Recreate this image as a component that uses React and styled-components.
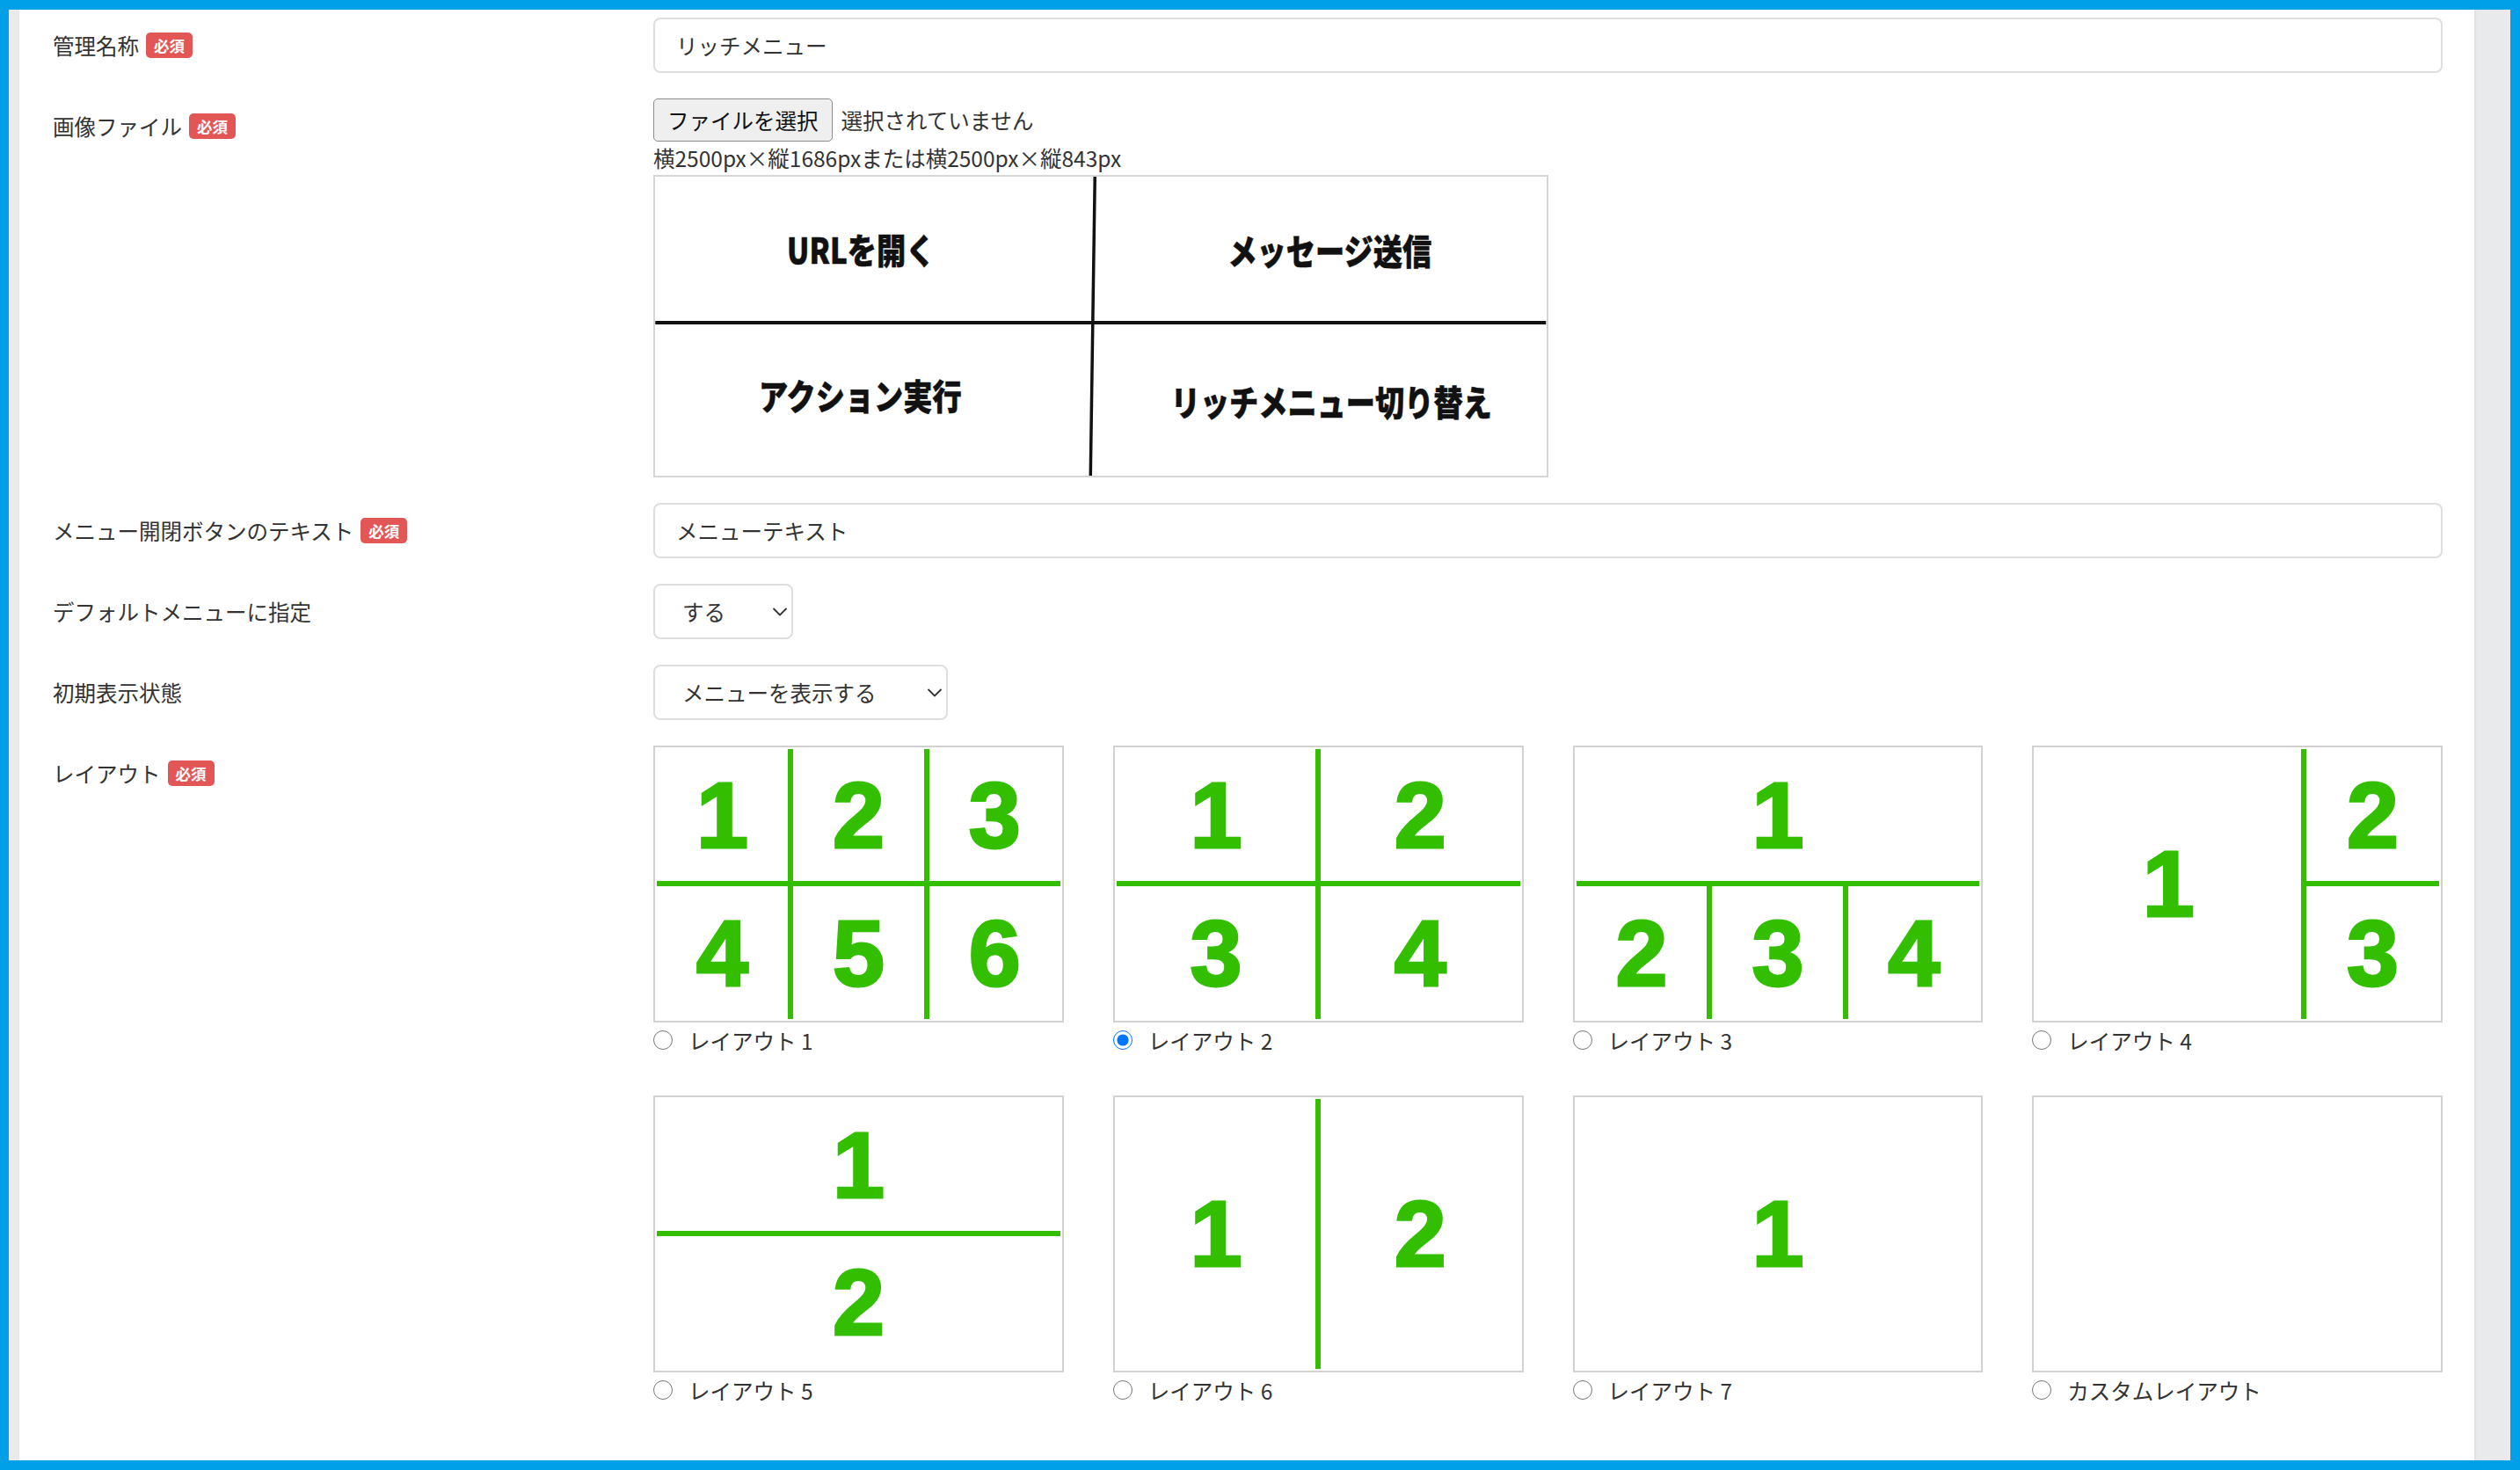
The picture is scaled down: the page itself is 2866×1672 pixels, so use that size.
import React from "react";
import styled, { createGlobalStyle } from "styled-components";

const GlobalStyle = createGlobalStyle`
    html, body {
        margin: 0;
        padding: 0;
        background: #00a0e9;
    }
    body {
        font-family: "Noto Sans CJK JP", "Noto Sans", sans-serif;
        color: #333;
    }
    * {
        box-sizing: border-box;
    }
`;

const GREEN = "#33bf00";

const layouts = [
    { name: "レイアウト 1", cols: "1fr 1fr 1fr", rows: "1fr 1fr", cells: [1, 2, 3, 4, 5, 6] },
    { name: "レイアウト 2", cols: "1fr 1fr", rows: "1fr 1fr", cells: [1, 2, 3, 4], checked: true },
    { name: "レイアウト 3", cols: "1fr 1fr 1fr", rows: "1fr 1fr", cells: [{ n: 1, area: "1 / 1 / 2 / 4" }, 2, 3, 4] },
    { name: "レイアウト 4", cols: "2fr 1fr", rows: "1fr 1fr", cells: [{ n: 1, area: "1 / 1 / 3 / 2" }, 2, 3] },
    { name: "レイアウト 5", cols: "1fr", rows: "1fr 1fr", cells: [1, 2] },
    { name: "レイアウト 6", cols: "1fr 1fr", rows: "1fr", cells: [1, 2] },
    { name: "レイアウト 7", cols: "1fr", rows: "1fr", cells: [1] },
    { name: "カスタムレイアウト", cells: [] },
];

// プレビュー画像内のボタン文言 (x, y は中心)
const previewLabels = [
    { text: "URLを開く", x: 234, y: 82 },
    { text: "メッセージ送信", x: 767, y: 83 },
    { text: "アクション実行", x: 233, y: 248 },
    { text: "リッチメニュー切り替え", x: 769, y: 255 },
];

function Chevron() {
    return (
        <ChevronIcon width="18" height="11" viewBox="0 0 18 11">
            <polyline points="1.5,1.5 9,9 16.5,1.5" fill="none" stroke="#333" strokeWidth="1.8" />
        </ChevronIcon>
    );
}

function Select({ width, value }) {
    return (
        <SelectWrap $width={width}>
            <SelectBox defaultValue={value}>
                <option>{value}</option>
            </SelectBox>
            <Chevron />
        </SelectWrap>
    );
}

function PreviewImage() {
    return (
        <Preview>
            <svg width="100%" height="100%" viewBox="0 0 1013 340">
                <line x1="0" y1="166" x2="1013" y2="166" stroke="#111" strokeWidth="4" />
                <line x1="500" y1="0" x2="495" y2="340" stroke="#111" strokeWidth="3.5" />
                {previewLabels.map((l) => (
                    <PreviewText key={l.text} transform={`translate(${l.x} ${l.y}) scale(0.83 1)`}>
                        {l.text}
                    </PreviewText>
                ))}
            </svg>
        </Preview>
    );
}

function LayoutThumb({ layout }) {
    return (
        <Thumb>
            {layout.cells.length > 0 && (
                <ThumbGrid $cols={layout.cols} $rows={layout.rows}>
                    {layout.cells.map((c) => {
                        const n = typeof c === "number" ? c : c.n;
                        const area = typeof c === "number" ? undefined : c.area;
                        return (
                            <Cell key={n} $area={area}>{n}</Cell>
                        );
                    })}
                </ThumbGrid>
            )}
        </Thumb>
    );
}

export default function App() {
    return (
        <Frame>
            <GlobalStyle />
            <Page>
                <Card>
                    <Row>
                        <Label>管理名称<Badge>必須</Badge></Label>
                        <TextInput defaultValue="リッチメニュー" />
                    </Row>

                    <Row>
                        <Label>画像ファイル<Badge>必須</Badge></Label>
                        <div>
                            <FileLine>
                                <FileButton type="button">ファイルを選択</FileButton>
                                <FileName>選択されていません</FileName>
                            </FileLine>
                            <Hint>横2500px×縦1686pxまたは横2500px×縦843px</Hint>
                            <PreviewImage />
                        </div>
                    </Row>

                    <Row>
                        <Label>メニュー開閉ボタンのテキスト<Badge>必須</Badge></Label>
                        <TextInput defaultValue="メニューテキスト" />
                    </Row>

                    <Row>
                        <Label>デフォルトメニューに指定</Label>
                        <div><Select width={159} value="する" /></div>
                    </Row>

                    <Row>
                        <Label>初期表示状態</Label>
                        <div><Select width={335} value="メニューを表示する" /></div>
                    </Row>

                    <Row>
                        <Label>レイアウト<Badge>必須</Badge></Label>
                        <LayoutGrid>
                            {layouts.map((l) => (
                                <LayoutItem key={l.name}>
                                    <LayoutThumb layout={l} />
                                    <RadioLabel>
                                        <Radio type="radio" name="layout" defaultChecked={!!l.checked} />
                                        {l.name}
                                    </RadioLabel>
                                </LayoutItem>
                            ))}
                        </LayoutGrid>
                    </Row>
                </Card>
            </Page>
        </Frame>
    );
}

const Frame = styled.div`
    display: flex;
    height: 100vh;
    padding: 11px 11px 11px 10px;
    background: #00a0e9;
    overflow: hidden;
`;

const Page = styled.div`
    display: flex;
    flex: 1;
    padding: 0 41px 0 12px;
    background: #e9eaec;
    overflow: hidden;
`;

const Card = styled.div`
    flex: 1;
    padding: 9px 36px 0 38px;
    background: #fff;
    box-shadow: 1px 0 3px rgba(0, 0, 0, 0.08);
`;

const Row = styled.div`
    display: grid;
    grid-template-columns: 683px 1fr;
    align-items: start;
    margin-bottom: 29px;
`;

const Label = styled.div`
    display: flex;
    align-items: center;
    gap: 8px;
    padding-top: 13px;
    font-size: 24.5px;
    line-height: 37px;
    color: #333;
`;

const Badge = styled.span`
    display: inline-flex;
    align-items: center;
    height: 29px;
    padding: 0 9px;
    border-radius: 5px;
    background: #e25656;
    color: #fff;
    font-size: 17.5px;
    font-weight: 700;
    line-height: 1;
`;

const TextInput = styled.input`
    display: block;
    width: 100%;
    height: 63px;
    padding: 0 24px;
    border: 2px solid #dedede;
    border-radius: 8px;
    font-family: inherit;
    font-size: 24.5px;
    color: #333;
    outline: none;
`;

const FileLine = styled.div`
    display: flex;
    align-items: center;
    height: 49px;
`;

const FileButton = styled.button`
    height: 49px;
    padding: 0 15px;
    border: 1.5px solid #8c8c8c;
    border-radius: 5px;
    background: #efefef;
    font-family: inherit;
    font-size: 24.5px;
    color: #111;
`;

const FileName = styled.span`
    margin-left: 10px;
    font-size: 24.5px;
    color: #333;
`;

const Hint = styled.div`
    font-size: 24.5px;
    line-height: 37px;
    color: #333;
`;

const Preview = styled.div`
    width: 50%;
    height: 344px;
    margin-top: 1px;
    border: 2px solid #d6d6d6;
    background: #fff;
`;

const PreviewText = styled.text`
    font-family: "Noto Sans CJK JP", sans-serif;
    font-size: 40px;
    font-weight: 900;
    fill: #111;
    stroke: #111;
    stroke-width: 0.6px;
    text-anchor: middle;
    dominant-baseline: central;
`;

const SelectWrap = styled.div`
    position: relative;
    width: ${(p) => p.$width}px;
`;

const SelectBox = styled.select`
    display: block;
    width: 100%;
    height: 63px;
    padding: 0 40px 0 31px;
    border: 2px solid #dedede;
    border-radius: 8px;
    background: #fff;
    appearance: none;
    font-family: inherit;
    font-size: 24.5px;
    color: #333;
    outline: none;
`;

const ChevronIcon = styled.svg`
    position: absolute;
    right: 6px;
    top: 50%;
    transform: translateY(-50%);
    pointer-events: none;
`;

const LayoutGrid = styled.div`
    display: grid;
    grid-template-columns: repeat(4, 1fr);
    column-gap: 56px;
    row-gap: 44px;
`;

const LayoutItem = styled.div`
    display: flex;
    flex-direction: column;
`;

const Thumb = styled.div`
    width: 100%;
    aspect-ratio: 2500 / 1686;
    padding: 2px;
    border: 2px solid #d2d2d2;
    background: #fff;
`;

const ThumbGrid = styled.div`
    display: grid;
    grid-template-columns: ${(p) => p.$cols};
    grid-template-rows: ${(p) => p.$rows};
    gap: 6px;
    height: 100%;
    background: ${GREEN};
`;

const Cell = styled.div`
    display: flex;
    align-items: center;
    justify-content: center;
    grid-area: ${(p) => p.$area || "auto"};
    background: #fff;
    color: ${GREEN};
    font-family: "Liberation Sans", Arial, sans-serif;
    font-size: 106px;
    font-weight: 700;
    line-height: 1;
    -webkit-text-stroke: 3px ${GREEN};
`;

const RadioLabel = styled.label`
    display: flex;
    align-items: center;
    gap: 18px;
    margin-top: 2px;
    font-size: 24.5px;
    line-height: 37px;
    color: #333;
`;

const Radio = styled.input`
    width: 22px;
    height: 22px;
    margin: 0;
`;
